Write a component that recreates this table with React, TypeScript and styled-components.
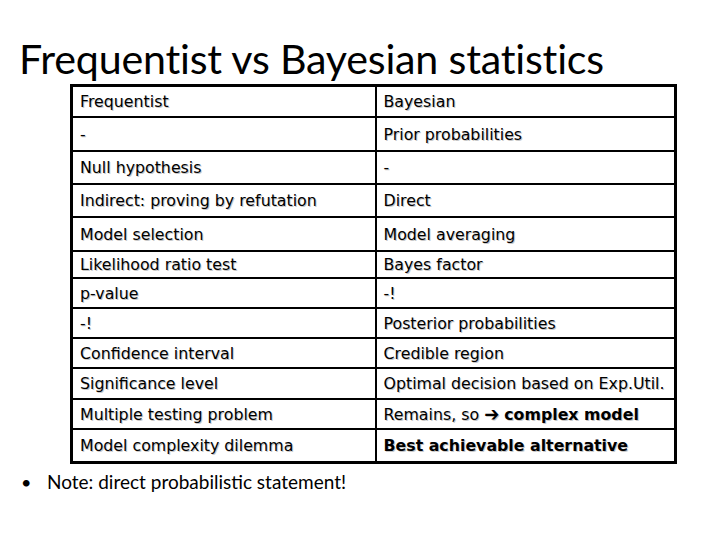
import * as React from 'react';
import styled, { createGlobalStyle } from 'styled-components';

const GlobalStyle = createGlobalStyle`
	html, body {
		margin: 0;
		padding: 0;
		background: #ffffff;
	}
`;

const Slide = styled.div`
	width: 720px;
	height: 540px;
	background: #ffffff;
	box-sizing: border-box;
	padding: 34px 0 0 0;
	overflow: hidden;
`;

const Title = styled.h1`
	margin: 0 0 0 19px;
	font-family: Lato, 'Open Sans', sans-serif;
	font-weight: 400;
	font-size: 41.2px;
	line-height: 48px;
	color: #000000;
	letter-spacing: -0.2px;
`;

const Table = styled.table`
	margin: 2px 0 0 70px;
	width: 607px;
	border-collapse: collapse;
	border: 3px solid #000000;
	table-layout: fixed;
`;

const Row = styled.tr<{ $h: number }>`
	height: ${(p) => p.$h}px;
`;

const Cell = styled.td<{ $bold?: boolean }>`
	border: 2px solid #000000;
	padding: 1px 0 0 7px;
	font-family: 'DejaVu Sans', Verdana, sans-serif;
	font-size: 15.8px;
	font-weight: ${(p) => (p.$bold ? 700 : 400)};
	color: #000000;
	text-shadow: 1px 1px 0 #c8c8c8;
	vertical-align: middle;
	white-space: nowrap;
	overflow: hidden;
`;

const Strong = styled.b`
	font-weight: 700;
`;

const Arrow = styled.span`
	display: inline-block;
	font-size: 18px;
	line-height: 1;
	margin-right: 5px;
	transform: scaleY(1.1);
`;

const Bullets = styled.ul`
	margin: 6px 0 0 0;
	padding: 0;
	list-style: none;
`;

const Bullet = styled.li`
	display: flex;
	align-items: baseline;
	font-family: Lato, 'Open Sans', sans-serif;
	font-size: 19px;
	color: #000000;
	&::before {
		content: '•';
		width: 26px;
		padding-left: 21px;
		box-sizing: content-box;
		font-size: 18px;
	}
`;

interface IRow {
	freq: React.ReactNode;
	bayes: React.ReactNode;
	h: number;
	boldBayes?: boolean;
}

const rows: IRow[] = [
	{ freq: 'Frequentist', bayes: 'Bayesian', h: 31 },
	{ freq: '-', bayes: 'Prior probabilities', h: 34 },
	{ freq: 'Null hypothesis', bayes: '-', h: 33 },
	{ freq: 'Indirect: proving by refutation', bayes: 'Direct', h: 33 },
	{ freq: 'Model selection', bayes: 'Model averaging', h: 34 },
	{ freq: 'Likelihood ratio test', bayes: 'Bayes factor', h: 27 },
	{ freq: 'p-value', bayes: '-!', h: 30 },
	{ freq: '-!', bayes: 'Posterior probabilities', h: 30 },
	{ freq: 'Confidence interval', bayes: 'Credible region', h: 30 },
	{ freq: 'Significance level', bayes: 'Optimal decision based on Exp.Util.', h: 31 },
	{
		freq: 'Multiple testing problem',
		bayes: (
			<>
				Remains, so <Arrow>➔</Arrow>
				<Strong>complex model</Strong>
			</>
		),
		h: 30,
	},
	{ freq: 'Model complexity dilemma', bayes: 'Best achievable alternative', h: 34, boldBayes: true },
];

const App: React.FC = () => {
	return (
		<>
			<GlobalStyle />
			<Slide>
				<Title>Frequentist vs Bayesian statistics</Title>
				<Table>
					<colgroup>
						<col style={{ width: 304 }} />
						<col />
					</colgroup>
					<tbody>
						{rows.map((r, i) => (
							<Row key={i} $h={r.h}>
								<Cell>{r.freq}</Cell>
								<Cell $bold={r.boldBayes}>{r.bayes}</Cell>
							</Row>
						))}
					</tbody>
				</Table>
				<Bullets>
					<Bullet>Note: direct probabilistic statement!</Bullet>
				</Bullets>
			</Slide>
		</>
	);
};

export default App;
